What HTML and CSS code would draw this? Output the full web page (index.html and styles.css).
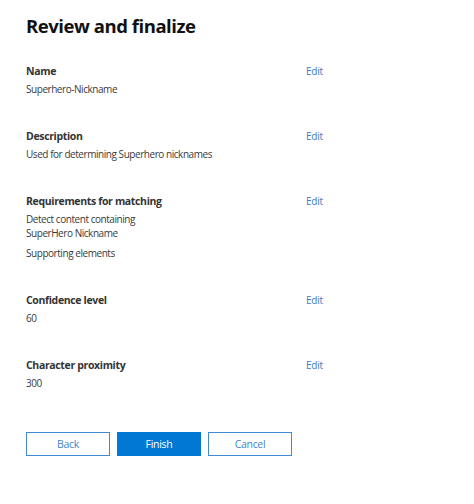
FILE: index.html
```html
<!DOCTYPE html>
<html>
<head>
<meta charset="UTF-8">
<title>Review and finalize</title>
<link rel="stylesheet" href="styles.css">
</head>
<body>

   <div class="page">
      <h1 class="title">Review and finalize</h1>

      <div class="section">
         <div class="label">Name</div>
         <a class="edit" href="#">Edit</a>
         <div class="values">
            <p>Superhero-Nickname</p>
         </div>
      </div>

      <div class="section">
         <div class="label">Description</div>
         <a class="edit" href="#">Edit</a>
         <div class="values">
            <p>Used for determining Superhero nicknames</p>
         </div>
      </div>

      <div class="section">
         <div class="label">Requirements for matching</div>
         <a class="edit" href="#">Edit</a>
         <div class="values">
            <p>Detect content containing<br>SuperHero Nickname</p>
            <p>Supporting elements</p>
         </div>
      </div>

      <div class="section">
         <div class="label">Confidence level</div>
         <a class="edit" href="#">Edit</a>
         <div class="values">
            <p>60</p>
         </div>
      </div>

      <div class="section">
         <div class="label">Character proximity</div>
         <a class="edit" href="#">Edit</a>
         <div class="values">
            <p>300</p>
         </div>
      </div>

      <div class="buttons">
         <button class="btn">Back</button>
         <button class="btn primary">Finish</button>
         <button class="btn">Cancel</button>
      </div>
   </div>

</body>
</html>
```

FILE: styles.css
```css
body {
   margin: 0;
   background: #fff;
   font-family: "Open Sans", "Noto Sans", sans-serif;
   color: #323130;
}

.page {
   padding: 12px 26px 0 26px;
}

.title {
   margin: 0 0 23px 0;
   font-size: 18.5px;
   line-height: 28px;
   font-weight: 700;
   color: #111;
   letter-spacing: -0.45px;
}

.section {
   display: grid;
   grid-template-columns: 280px auto;
   margin-bottom: 32px;
}

.label {
   font-size: 10.5px;
   line-height: 16px;
   font-weight: 700;
   color: #333;
   letter-spacing: -0.35px;
   margin-bottom: 3px;
}

.edit {
   font-size: 10px;
   line-height: 16px;
   color: #3b7cc4;
   letter-spacing: -0.2px;
   text-decoration: none;
}

.values {
   grid-column: 1 / 3;
}

.values p {
   margin: 0 0 6px 0;
   font-size: 10px;
   line-height: 14px;
   color: #3a3a3a;
   letter-spacing: -0.45px;
}

.values p:last-child {
   margin-bottom: 0;
}

.buttons {
   display: flex;
   gap: 7px;
   margin-top: 42px;
}

.btn {
   width: 84px;
   height: 24px;
   box-sizing: border-box;
   border: 1px solid #3f8ad6;
   background: #fff;
   color: #3f85cc;
   font-family: "Open Sans", "Noto Sans", sans-serif;
   font-size: 10.5px;
   letter-spacing: -0.3px;
   padding: 0;
}

.primary {
   background: #0078d4;
   border-color: #0078d4;
   color: #fff;
}
```
